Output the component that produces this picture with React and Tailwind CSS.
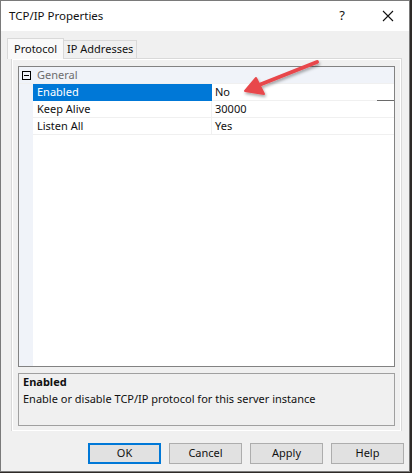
import React from "react";

const font = { fontFamily: '"Noto Sans", "Open Sans", Arial, sans-serif' };

const rows = [
  { name: "Enabled", value: "No", selected: true },
  { name: "Keep Alive", value: "30000" },
  { name: "Listen All", value: "Yes" },
];

const CloseIcon = () => (
  <svg width="12" height="12" viewBox="0 0 12 12">
    <path d="M1 1 L11 11 M11 1 L1 11" stroke="#111" strokeWidth="1.1" />
  </svg>
);

// red annotation arrow pointing at the "No" value
const Arrow = () => (
  <svg
    className="absolute left-[225px] -top-[3px] pointer-events-none"
    width="90"
    height="46"
    viewBox="0 0 90 46"
  >
    <defs>
      <filter id="sh" x="-20%" y="-40%" width="140%" height="180%">
        <feDropShadow dx="1" dy="2" stdDeviation="1.5" floodColor="#000" floodOpacity="0.35" />
      </filter>
    </defs>
    <g filter="url(#sh)">
      <path d="M80 6 L22 29" stroke="#e8474b" strokeWidth="4" strokeLinecap="round" />
      <path d="M8 35 L19 22 L27 38 Z" fill="#e8474b" stroke="#e8474b" strokeWidth="2" strokeLinejoin="round" />
    </g>
  </svg>
);

const Button = ({ label, primary }) => (
  <button
    className={`w-[73px] h-[21px] bg-[#e1e1e1] text-[11px] text-[#111] flex items-center justify-center ${
      primary ? "border-2 border-[#0078d7]" : "border border-[#adadad]"
    }`}
    style={font}
  >
    {label}
  </button>
);

export default function App() {
  return (
    <div className="w-[412px] h-[473px] bg-[#2e2a27] overflow-hidden" style={font}>
      <div className="w-[410px] h-[472px] bg-[#f0f0f0] border border-[#7a7a7a] flex flex-col">
        {/* title bar */}
        <div className="h-[30px] bg-white flex items-center pl-[8px] pr-[8px] text-[11.5px] text-[#111]">
          <span className="flex-1">TCP/IP Properties</span>
          <span className="w-[10px] text-[13px] mr-[35px] text-center">?</span>
          <span className="mr-[7px] flex items-center">
            <CloseIcon />
          </span>
        </div>

        {/* tabs */}
        <div className="pl-[6px] pt-[7px] flex items-end text-[11px] text-[#111]">
          <div className="relative z-10 h-[21px] px-[6px] bg-[#f9f9f9] border border-[#d9d9d9] border-b-0 flex items-center -mb-[1px]">
            Protocol
          </div>
          <div className="h-[18px] px-[3px] bg-[#f0f0f0] border border-[#d9d9d9] border-b-0 border-l-0 flex items-center">
            IP Addresses
          </div>
        </div>

        {/* tab page */}
        <div className="relative ml-[10px] mr-[7px] h-[373px] border border-[#d9d9d9] bg-[#f0f0f0] flex flex-col">
          <div className="flex-1 border border-white px-[5px] pt-[6px] pb-[4px] flex flex-col gap-[6px]">
            {/* property grid */}
            <div className="h-[301px] border border-[#828282] bg-white flex flex-col text-[11px]">
              <div className="h-[17px] flex bg-[#f0f3f9] border-b border-[#f0f0f0]">
                <div className="w-[14px] flex items-center justify-center">
                  <div className="w-[9px] h-[9px] border border-black flex items-center justify-center">
                    <div className="w-[5px] h-px bg-black" />
                  </div>
                </div>
                <span className="pl-[4px] text-[#6d6d6d] leading-[16px]">General</span>
              </div>
              {rows.map((r) => (
                <div key={r.name} className="h-[17px] flex">
                  <div className="w-[14px] bg-[#f0f3f9]" />
                  <div
                    className={`w-[179px] pl-[4px] leading-[16px] border-b border-r ${
                      r.selected
                        ? "bg-[#0078d7] text-white border-[#0078d7]"
                        : "text-[#111] border-[#f0f0f0]"
                    }`}
                  >
                    {r.name}
                  </div>
                  <div className="relative flex-1 pl-[3px] leading-[16px] text-[#111] border-b border-[#f0f0f0]">
                    {r.value}
                    {r.selected && (
                      <div className="absolute right-0 -bottom-[1px] w-[17px] h-px bg-[#6a6a6a]" />
                    )}
                  </div>
                </div>
              ))}
              <div className="flex-1 flex">
                <div className="w-[14px] bg-[#f0f3f9]" />
              </div>
            </div>

            {/* description */}
            <div className="h-[53px] border border-[#a0a0a0] bg-[#f0f0f0] px-[4px] text-[11px] text-[#111] leading-[16px]">
              <div className="font-bold">Enabled</div>
              <div className="mt-[1px]">Enable or disable TCP/IP protocol for this server instance</div>
            </div>
          </div>
          <Arrow />
        </div>

        {/* buttons */}
        <div className="flex justify-end gap-[8px] pr-[5px] mt-[12px]">
          <Button label="OK" primary />
          <Button label="Cancel" />
          <Button label="Apply" />
          <Button label="Help" />
        </div>
      </div>
    </div>
  );
}
